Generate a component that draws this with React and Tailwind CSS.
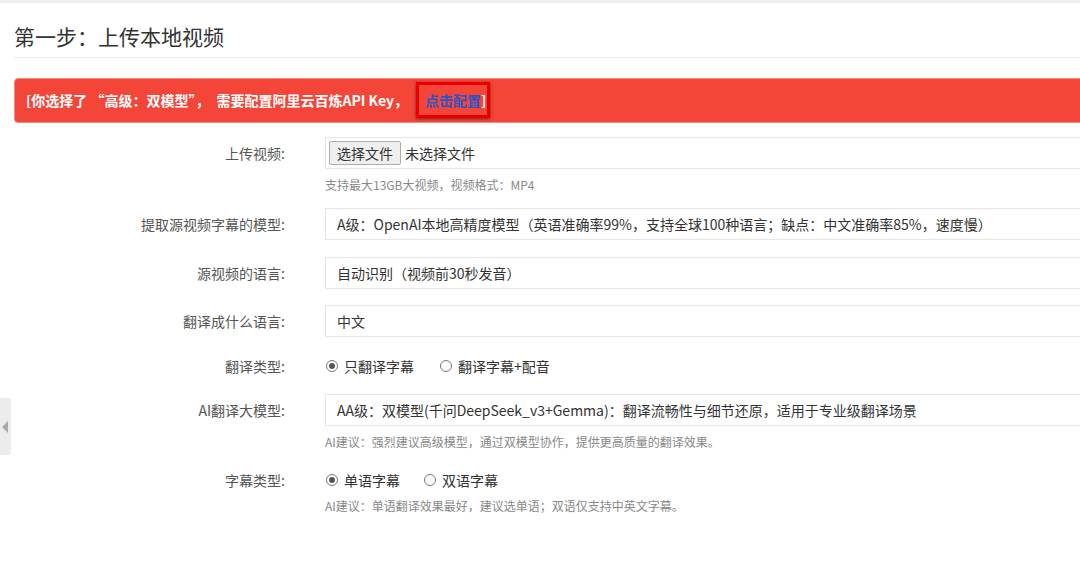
import React from 'react'

const font = { fontFamily: '"Noto Sans CJK SC", "Noto Sans", sans-serif' }

function Row({ label, children, className = '' }) {
  return (
    <div className={`flex items-center ${className}`}>
      <div className="w-[273px] shrink-0 pr-[2px] text-right text-[14px] text-[#555]">{label}</div>
      <div className="ml-[38px] flex-1">{children}</div>
    </div>
  )
}

function Field({ children }) {
  return (
    <div className="flex h-[32px] items-center border border-[#e6e6e6] bg-white pl-[11px] text-[14px] text-[#333]">
      {children}
    </div>
  )
}

function Radio({ checked, label }) {
  return (
    <label className="flex items-center gap-[6px] text-[14px] text-[#333]">
      <span className="flex h-[12px] w-[12px] items-center justify-center rounded-full border border-[#777] bg-white">
        {checked && <span className="h-[6px] w-[6px] rounded-full bg-[#555]" />}
      </span>
      {label}
    </label>
  )
}

export default function App() {
  return (
    <div className="relative h-[574px] w-[1080px] overflow-hidden bg-white" style={font}>
      <div className="h-[3px] bg-[#eeeeee]" />

      {/* side tab */}
      <div className="absolute left-0 top-[398px] flex h-[57px] w-[11px] items-center justify-center rounded-r-[3px] bg-[#ececec]">
        <span className="ml-[-2px] h-0 w-0 border-y-[6px] border-r-[6px] border-y-transparent border-r-[#aaa]" />
      </div>

      <div className="w-[1100px] pl-[14px]">
        <h1 className="mt-[18px] border-b border-[#eeeeee] pb-[6px] text-[21px] leading-[30px] text-[#333]">第一步：上传本地视频</h1>

        <div className="mt-[20px] flex h-[45px] items-center rounded-l-[4px] border border-[#f88a82] bg-[#f44539] pl-[11px] text-[14px] font-bold text-white">
          <span>[你选择了 “高级：双模型”，</span>
          <span className="ml-[7px]">需要配置阿里云百炼API Key，</span>
          <span className="relative ml-[17px]">
            <span className="text-[#2a55c8]">点击配置</span>]
            <span className="absolute left-[-9px] right-[-4px] top-[-8px] bottom-[-7px] border-[3px] border-[#e80000] shadow-[0_1px_3px_rgba(0,0,0,0.5)]" />
          </span>
        </div>
      </div>

      <div className="w-[1100px] pl-[14px]">
        <Row label="上传视频:" className="mt-[14px]">
          <div className="flex h-[32px] items-center border border-[#e6e6e6] bg-white pl-[3px] text-[14px] text-[#333]">
            <span className="flex h-[24px] items-center rounded-[2px] border border-[#adadad] bg-[#efefef] px-[7px]">选择文件</span>
            <span className="ml-[4px]">未选择文件</span>
          </div>
        </Row>
        <p className="ml-[311px] mt-[8px] text-[12px] leading-[16px] text-[#888]">支持最大13GB大视频，视频格式：MP4</p>

        <Row label="提取源视频字幕的模型:" className="mt-[15px]">
          <Field>A级：OpenAI本地高精度模型（英语准确率99%，支持全球100种语言；缺点：中文准确率85%，速度慢）</Field>
        </Row>

        <Row label="源视频的语言:" className="mt-[17px]">
          <Field>自动识别（视频前30秒发音）</Field>
        </Row>

        <Row label="翻译成什么语言:" className="mt-[16px]">
          <Field>中文</Field>
        </Row>

        <Row label="翻译类型:" className="mt-[18px]">
          <div className="flex h-[22px] items-center gap-[26px] pl-[1px]">
            <Radio checked label="只翻译字幕" />
            <Radio label="翻译字幕+配音" />
          </div>
        </Row>

        <Row label="AI翻译大模型:" className="mt-[17px]">
          <Field>AA级：双模型(千问DeepSeek_v3+Gemma)：翻译流畅性与细节还原，适用于专业级翻译场景</Field>
        </Row>
        <p className="ml-[311px] mt-[8px] text-[12px] leading-[16px] text-[#888]">AI建议：强烈建议高级模型，通过双模型协作，提供更高质量的翻译效果。</p>

        <Row label="字幕类型:" className="mt-[19px]">
          <div className="flex h-[22px] items-center gap-[24px] pl-[1px]">
            <Radio checked label="单语字幕" />
            <Radio label="双语字幕" />
          </div>
        </Row>
        <p className="ml-[311px] mt-[7px] text-[12px] leading-[16px] text-[#888]">AI建议：单语翻译效果最好，建议选单语；双语仅支持中英文字幕。</p>
      </div>
    </div>
  )
}
